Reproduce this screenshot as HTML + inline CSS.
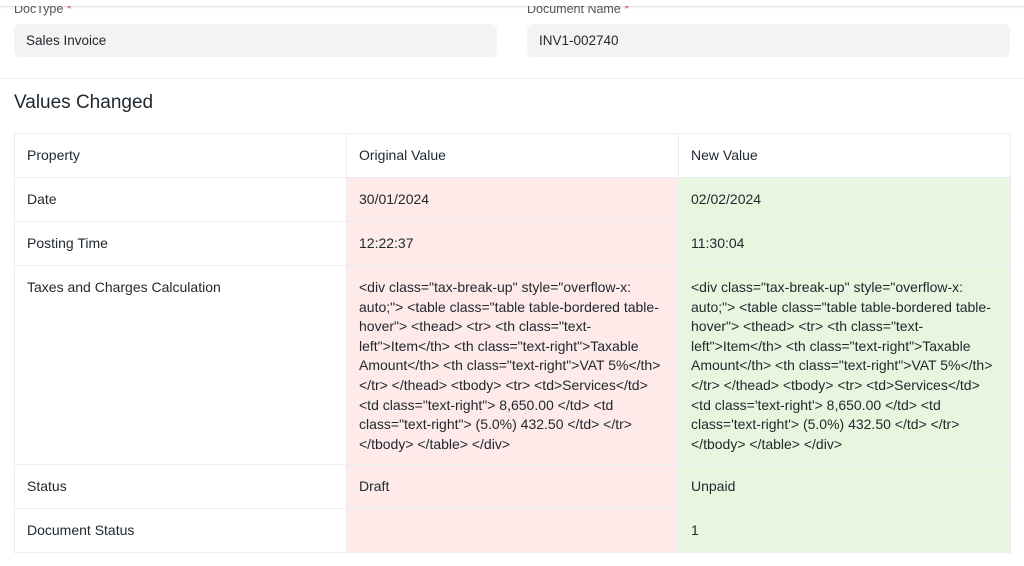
<!DOCTYPE html>
<html><head><meta charset="utf-8"><style>
*{box-sizing:border-box;margin:0;padding:0}
body{width:1024px;height:566px;overflow:hidden;background:#fff;font-family:"Liberation Sans",sans-serif;color:#1f272e;position:relative}
.topbar{position:absolute;left:0;top:0;width:1024px;height:6px;background:#fff;box-shadow:0 1px 2px rgba(0,0,0,.15);z-index:2}
.lbl{position:absolute;top:2px;font-size:12.5px;color:#555}
.lbl span{color:#e24c4c}
.inp{position:absolute;top:24px;height:33px;background:#f3f3f3;border-radius:6px;font-size:13.5px;padding:9px 12px;color:#1f272e}
.sep{position:absolute;left:0;top:78px;width:1024px;height:1px;background:#eceef0}
h2{position:absolute;left:14px;top:92px;font-size:19px;font-weight:normal;color:#1f272e}
table{position:absolute;left:14px;top:133px;width:996px;border-collapse:collapse;font-size:14px;table-layout:fixed}
td{border:1px solid #ebeef0;padding:0 12px;vertical-align:top;line-height:19.6px;white-space:nowrap}
tr.s td{height:44px;padding-top:12px}
.o{background:#fdeae9}
.n{background:#e9f6df}
tr.t td{height:199px;padding-top:12px}
</style></head><body>
<div class="topbar"></div>
<div class="lbl" style="left:14px">DocType <span>*</span></div>
<div class="lbl" style="left:527px">Document Name <span>*</span></div>
<div class="inp" style="left:14px;width:483px">Sales Invoice</div>
<div class="inp" style="left:527px;width:483px">INV1-002740</div>
<div class="sep"></div>
<h2>Values Changed</h2>
<table>
<colgroup><col style="width:332px"><col style="width:332px"><col style="width:332px"></colgroup>
<tr class="s"><td>Property</td><td>Original Value</td><td>New Value</td></tr>
<tr class="s"><td>Date</td><td class="o">30/01/2024</td><td class="n">02/02/2024</td></tr>
<tr class="s"><td>Posting Time</td><td class="o">12:22:37</td><td class="n">11:30:04</td></tr>
<tr class="t"><td>Taxes and Charges Calculation</td>
<td class="o">&lt;div class="tax-break-up" style="overflow-x:<br>auto;"&gt; &lt;table class="table table-bordered table-<br>hover"&gt; &lt;thead&gt; &lt;tr&gt; &lt;th class="text-<br>left"&gt;Item&lt;/th&gt; &lt;th class="text-right"&gt;Taxable<br>Amount&lt;/th&gt; &lt;th class="text-right"&gt;VAT 5%&lt;/th&gt;<br>&lt;/tr&gt; &lt;/thead&gt; &lt;tbody&gt; &lt;tr&gt; &lt;td&gt;Services&lt;/td&gt;<br>&lt;td class="text-right"&gt; 8,650.00 &lt;/td&gt; &lt;td<br>class="text-right"&gt; (5.0%) 432.50 &lt;/td&gt; &lt;/tr&gt;<br>&lt;/tbody&gt; &lt;/table&gt; &lt;/div&gt;</td>
<td class="n">&lt;div class="tax-break-up" style="overflow-x:<br>auto;"&gt; &lt;table class="table table-bordered table-<br>hover"&gt; &lt;thead&gt; &lt;tr&gt; &lt;th class="text-<br>left"&gt;Item&lt;/th&gt; &lt;th class="text-right"&gt;Taxable<br>Amount&lt;/th&gt; &lt;th class="text-right"&gt;VAT 5%&lt;/th&gt;<br>&lt;/tr&gt; &lt;/thead&gt; &lt;tbody&gt; &lt;tr&gt; &lt;td&gt;Services&lt;/td&gt;<br>&lt;td class='text-right'&gt; 8,650.00 &lt;/td&gt; &lt;td<br>class='text-right'&gt; (5.0%) 432.50 &lt;/td&gt; &lt;/tr&gt;<br>&lt;/tbody&gt; &lt;/table&gt; &lt;/div&gt;</td></tr>
<tr class="s"><td>Status</td><td class="o">Draft</td><td class="n">Unpaid</td></tr>
<tr class="s"><td>Document Status</td><td class="o"></td><td class="n">1</td></tr>
</table>
</body></html>
